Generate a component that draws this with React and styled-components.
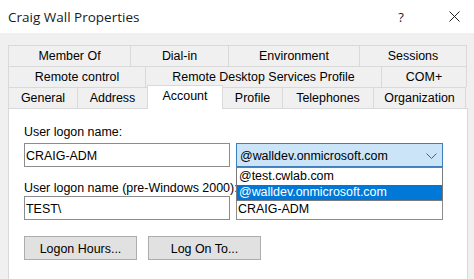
import React from "react";
import styled, { createGlobalStyle } from "styled-components";

const Global = createGlobalStyle`
  html, body { margin: 0; padding: 0; background: #f0f0f0; overflow: hidden; }
  * { box-sizing: border-box; }
`;

const Window = styled.div`
  width: 474px;
  height: 279px;
  overflow: hidden;
  background: #f0f0f0;
  font-family: "Liberation Sans", Arial, sans-serif;
  font-size: 12.45px;
  color: #000;
`;

const TitleBar = styled.div`
  height: 33px;
  background: #fff;
  display: flex;
  align-items: center;
  padding-left: 8px;
`;

const Title = styled.div`
  flex: 1;
  font-family: "Open Sans", "Noto Sans", sans-serif;
  font-size: 13.5px;
  color: #1a1a1a;
  padding-top: 0px;
`;

const CaptionButton = styled.div`
  width: 40px;
  height: 33px;
  display: flex;
  align-items: center;
  justify-content: center;
  font-family: "Open Sans", sans-serif;
  font-size: 13px;
  color: #222;
  margin-left: ${(p) => p.$gap || 0}px;
`;

const Body = styled.div`
  padding: 12px 6px 0 8px;
`;

const TabRow = styled.div`
  display: flex;
  height: 21px;
  align-items: flex-start;
  width: 459px;
`;

const Tab = styled.div`
  width: ${(p) => p.$w}px;
  height: 21px;
  flex: none;
  display: flex;
  align-items: center;
  justify-content: center;
  background: #f0f0f0;
  border-top: 1px solid #d9d9d9;
  border-left: 1px solid #d9d9d9;
  border-right: ${(p) => (p.$last ? "1px solid #d9d9d9" : "none")};
  white-space: nowrap;
`;

const ActiveTab = styled(Tab)`
  background: #fff;
  height: 24px;
  margin-top: -2px;
  padding-bottom: 3px;
  border-right: 1px solid #d9d9d9;
  margin-right: -1px;
  position: relative;
  z-index: 2;
`;

const Panel = styled.div`
  width: 460px;
  height: 190px;
  background: #fff;
  border: 1px solid #d9d9d9;
  padding: 16px 0 0 15px;
  position: relative;
  z-index: 1;
`;

const Label = styled.div`
  line-height: 15px;
  margin-top: ${(p) => p.$top || 0}px;
  margin-bottom: ${(p) => p.$bottom || 0}px;
  white-space: nowrap;
`;

const FieldRow = styled.div`
  display: flex;
  gap: 6px;
`;

const TextBox = styled.div`
  width: ${(p) => p.$w}px;
  height: 24px;
  border: 1px solid #8c8c8c;
  background: #fff;
  display: flex;
  align-items: center;
  padding-left: 1px;
  padding-top: 1px;
  white-space: nowrap;
`;

const ComboWrap = styled.div`
  position: relative;
  width: 207px;
`;

const ComboBox = styled.div`
  width: 207px;
  height: 24px;
  border: 1px solid #3d7ebf;
  background: #cce4f7;
  display: flex;
  align-items: center;
  justify-content: space-between;
  padding: 1px 5px 0 3px;
`;

const DropList = styled.div`
  position: absolute;
  top: 100%;
  left: 0;
  width: 207px;
  background: #fff;
  border: 1px solid #7a7a7a;
  z-index: 5;
`;

const Item = styled.div`
  height: ${(p) => p.$h}px;
  line-height: ${(p) => p.$h}px;
  padding-left: 2px;
  background: ${(p) => (p.$sel ? "#0078d7" : "#fff")};
  color: ${(p) => (p.$sel ? "#fff" : "#000")};
  white-space: nowrap;
`;

const ButtonRow = styled.div`
  display: flex;
  gap: 11px;
  margin-top: 16px;
`;

const Button = styled.div`
  width: 113px;
  height: 24px;
  background: #e1e1e1;
  border: 1px solid #adadad;
  display: flex;
  align-items: center;
  justify-content: center;
  padding-top: 1px;
`;

const rows = [
  [
    ["Member Of", 122],
    ["Dial-in", 98],
    ["Environment", 131],
    ["Sessions", 108],
  ],
  [
    ["Remote control", 137],
    ["Remote Desktop Services Profile", 236],
    ["COM+", 86],
  ],
];

const bottomRow = [
  ["General", 69],
  ["Address", 70],
  ["Account", 76, true],
  ["Profile", 60],
  ["Telephones", 91],
  ["Organization", 93],
];

export default function App() {
  return (
    <Window>
      <Global />
      <TitleBar>
        <Title>Craig Wall Properties</Title>
        <CaptionButton>?</CaptionButton>
        <CaptionButton $gap={13}>
          <svg width="11" height="11" viewBox="0 0 11 11">
            <path d="M0.5 0.5 L10.5 10.5 M10.5 0.5 L0.5 10.5" stroke="#222" strokeWidth="1" fill="none" />
          </svg>
        </CaptionButton>
      </TitleBar>
      <Body>
        {rows.map((r, i) => (
          <TabRow key={i}>
            {r.map(([t, w], j) => (
              <Tab key={t} $w={w} $last={j === r.length - 1}>
                {t}
              </Tab>
            ))}
          </TabRow>
        ))}
        <TabRow>
          {bottomRow.map(([t, w, active], j) =>
            active ? (
              <ActiveTab key={t} $w={w}>
                {t}
              </ActiveTab>
            ) : (
              <Tab key={t} $w={w} $last={j === bottomRow.length - 1}>
                {t}
              </Tab>
            )
          )}
        </TabRow>
        <Panel>
          <Label $bottom={3}>User logon name:</Label>
          <FieldRow>
            <TextBox $w={206}>CRAIG-ADM</TextBox>
            <ComboWrap>
              <ComboBox>
                <span>@walldev.onmicrosoft.com</span>
                <svg width="11" height="6" viewBox="0 0 11 6">
                  <path d="M0.5 0.5 L5.5 5.5 L10.5 0.5" stroke="#606060" strokeWidth="1" fill="none" />
                </svg>
              </ComboBox>
              <DropList>
                <Item $h={17}>@test.cwlab.com</Item>
                <Item $h={15} $sel>
                  @walldev.onmicrosoft.com
                </Item>
              </DropList>
            </ComboWrap>
          </FieldRow>
          <Label $top={14}>User logon name (pre-Windows 2000):</Label>
          <FieldRow>
            <TextBox $w={206}>TEST\</TextBox>
            <TextBox $w={207}>CRAIG-ADM</TextBox>
          </FieldRow>
          <ButtonRow>
            <Button>Logon Hours...</Button>
            <Button>Log On To...</Button>
          </ButtonRow>
        </Panel>
      </Body>
    </Window>
  );
}
